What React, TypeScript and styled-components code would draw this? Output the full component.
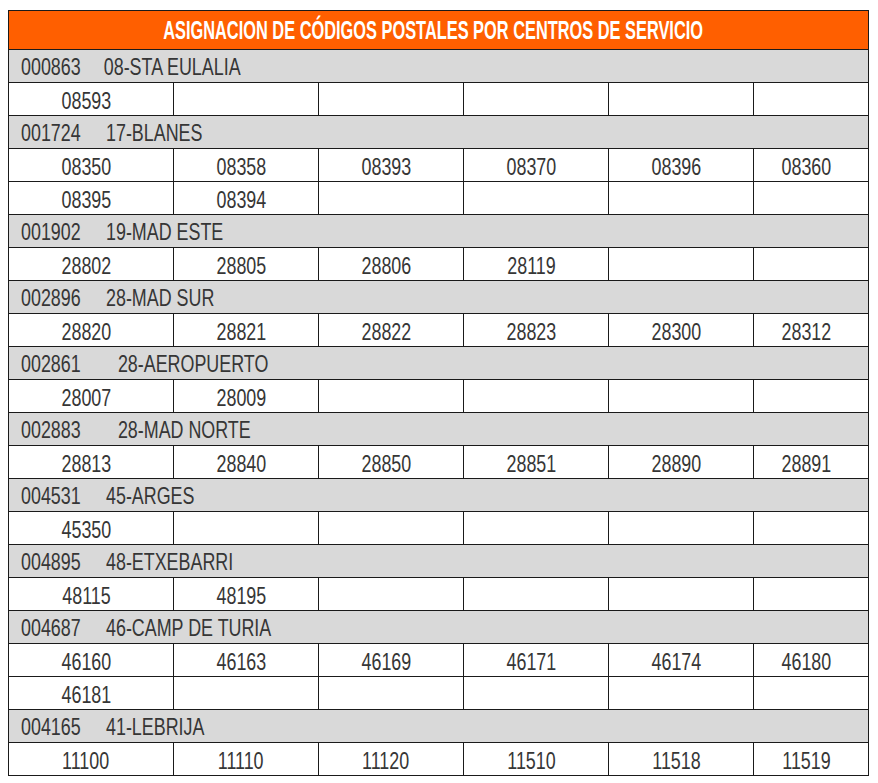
import React from "react";
import styled, { createGlobalStyle } from "styled-components";

const GlobalStyle = createGlobalStyle`
  html, body { margin: 0; padding: 0; background: #ffffff; }
  body { font-family: "Liberation Sans", Arial, sans-serif; }
`;

const Wrapper = styled.div`
  padding: 10px 0 0 8px;
`;

const Table = styled.table`
  border-collapse: collapse;
  table-layout: fixed;
  width: 860px;
  font-family: "Liberation Sans", Arial, sans-serif;
`;

const Col = styled.col<{ $w: number }>`
  width: ${(p) => p.$w}px;
`;

const HeaderCell = styled.th`
  height: 37px;
  padding: 1px 10px 0 0;
  background: #ff5f00;
  color: #ffffff;
  font-weight: 700;
  font-size: 25px;
  line-height: 1;
  text-align: center;
  border: 1px solid #1a1a1a;
  white-space: nowrap;
`;

const Narrow = styled.span<{ $scale: number; $origin?: string }>`
  display: inline-block;
  transform: scaleX(${(p) => p.$scale});
  transform-origin: ${(p) => p.$origin || "center"};
`;

const GroupCell = styled.td`
  height: 30px;
  padding: 2px 0 0 12px;
  background: #d9d9d9;
  border: 1px solid #1a1a1a;
  color: #363636;
  font-size: 24px;
  line-height: 1;
  white-space: nowrap;
`;

const GroupLine = styled.div<{ $gap: number }>`
  display: flex;
  align-items: center;
  gap: ${(p) => p.$gap}px;
  transform: scaleX(0.745);
  transform-origin: left center;
`;

const DataCell = styled.td`
  height: 29px;
  padding: 3px 10px 0 0;
  background: #ffffff;
  border: 1px solid #1a1a1a;
  color: #363636;
  font-size: 24px;
  line-height: 1;
  text-align: center;
  white-space: nowrap;
`;

type Group = { code: string; name: string; gap: number; zips: string[] };

const groups: Group[] = [
  { code: "000863", name: "08-STA EULALIA", gap: 31, zips: ["08593"] },
  { code: "001724", name: "17-BLANES", gap: 34, zips: ["08350", "08358", "08393", "08370", "08396", "08360", "08395", "08394"] },
  { code: "001902", name: "19-MAD ESTE", gap: 34, zips: ["28802", "28805", "28806", "28119"] },
  { code: "002896", name: "28-MAD SUR", gap: 34, zips: ["28820", "28821", "28822", "28823", "28300", "28312"] },
  { code: "002861", name: "28-AEROPUERTO", gap: 50, zips: ["28007", "28009"] },
  { code: "002883", name: "28-MAD NORTE", gap: 50, zips: ["28813", "28840", "28850", "28851", "28890", "28891"] },
  { code: "004531", name: "45-ARGES", gap: 34, zips: ["45350"] },
  { code: "004895", name: "48-ETXEBARRI", gap: 34, zips: ["48115", "48195"] },
  { code: "004687", name: "46-CAMP DE TURIA", gap: 34, zips: ["46160", "46163", "46169", "46171", "46174", "46180", "46181"] },
  { code: "004165", name: "41-LEBRIJA", gap: 34, zips: ["11100", "11110", "11120", "11510", "11518", "11519"] },
];

const widths = [165, 145, 145, 145, 145, 115];

function chunk(arr: string[]): string[][] {
  const rows: string[][] = [];
  for (let i = 0; i < arr.length; i += 6) {
    const r = arr.slice(i, i + 6);
    while (r.length < 6) r.push("");
    rows.push(r);
  }
  return rows;
}

export default function App() {
  return (
    <>
      <GlobalStyle />
      <Wrapper>
        <Table>
          <colgroup>
            {widths.map((w, i) => (
              <Col key={i} $w={w} />
            ))}
          </colgroup>
          <thead>
            <tr>
              <HeaderCell colSpan={6}>
                <Narrow $scale={0.655}>ASIGNACION DE CÓDIGOS POSTALES POR CENTROS DE SERVICIO</Narrow>
              </HeaderCell>
            </tr>
          </thead>
          <tbody>
            {groups.map((g) => (
              <React.Fragment key={g.code}>
                <tr>
                  <GroupCell colSpan={6}>
                    <GroupLine $gap={g.gap}>
                      <span>{g.code}</span>
                      <span>{g.name}</span>
                    </GroupLine>
                  </GroupCell>
                </tr>
                {chunk(g.zips).map((row, ri) => (
                  <tr key={ri}>
                    {row.map((z, zi) => (
                      <DataCell key={zi}>
                        <Narrow $scale={0.745}>{z}</Narrow>
                      </DataCell>
                    ))}
                  </tr>
                ))}
              </React.Fragment>
            ))}
          </tbody>
        </Table>
      </Wrapper>
    </>
  );
}
